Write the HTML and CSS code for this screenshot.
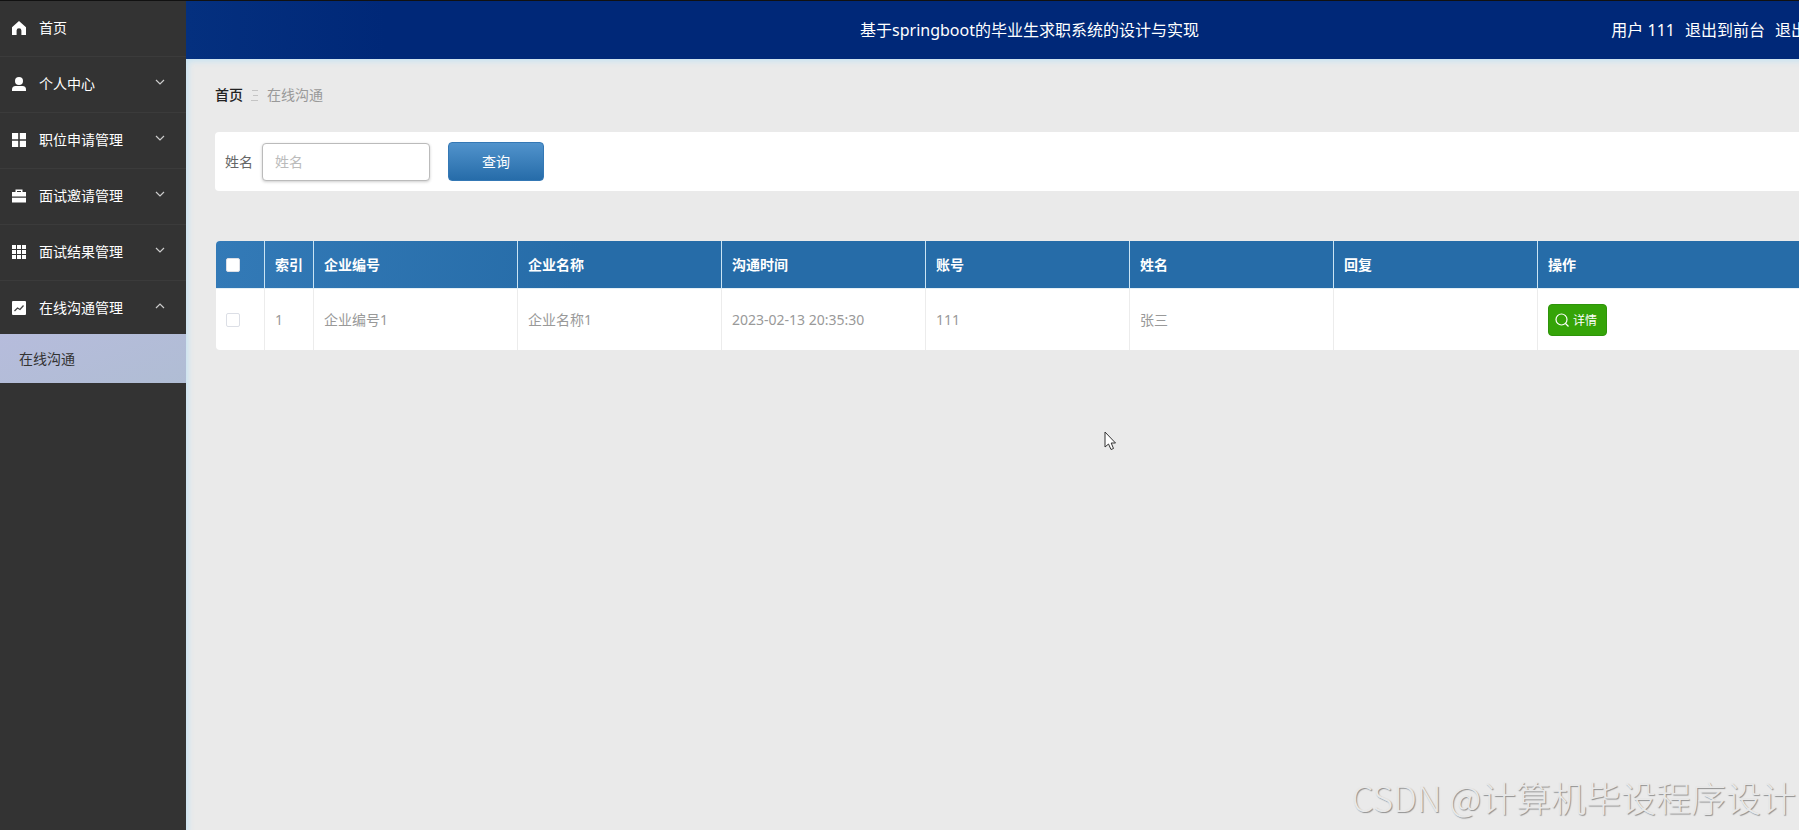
FILE: index.html
```html
<!DOCTYPE html>
<html lang="zh-CN">
<head>
    <meta charset="UTF-8">
    <meta name="viewport" content="width=device-width, initial-scale=1.0">
    <title>基于springboot的毕业生求职系统的设计与实现</title>
    <link rel="stylesheet" href="styles.css">
</head>
<body>

    <div class="app">

        <!-- 左侧菜单 -->

        <nav class="sidebar">
            <a href="#" class="menu-item">
                <svg class="menu-icon" viewBox="0 0 16 16"><path d="M8 1 15 7.2V15H10.4V10.6A2 2 0 0 0 5.6 10.6V15H1V7.2Z"/></svg>
                <span>首页</span>
            </a>
            <a href="#" class="menu-item">
                <svg class="menu-icon" viewBox="0 0 16 16"><circle cx="8" cy="5" r="4"/><path d="M1 15V13.500Q1 10 4.500 10H11.500Q15 10 15 13.500V15Z"/></svg>
                <span>个人中心</span>
                <svg class="arrow" viewBox="0 0 10 10"><path d="M1 3 5 7 9 3"/></svg>
            </a>
            <a href="#" class="menu-item">
                <svg class="menu-icon" viewBox="0 0 16 16"><path d="M1 1H7.200V7.200H1ZM8.800 1H15V7.200H8.800ZM1 8.800H7.200V15H1ZM8.800 8.800H15V15H8.800Z"/></svg>
                <span>职位申请管理</span>
                <svg class="arrow" viewBox="0 0 10 10"><path d="M1 3 5 7 9 3"/></svg>
            </a>
            <a href="#" class="menu-item">
                <svg class="menu-icon" viewBox="0 0 16 16"><path fill-rule="evenodd" d="M4.500 4V1.500H11.500V4H15V8.600H1V4ZM6 4H10V3H6ZM1 9.800H15V14.500H1Z"/></svg>
                <span>面试邀请管理</span>
                <svg class="arrow" viewBox="0 0 10 10"><path d="M1 3 5 7 9 3"/></svg>
            </a>
            <a href="#" class="menu-item">
                <svg class="menu-icon" viewBox="0 0 16 16"><path d="M1 1H5V5H1ZM6 1H10V5H6ZM11 1H15V5H11ZM1 6H5V10H1ZM6 6H10V10H6ZM11 6H15V10H11ZM1 11H5V15H1ZM6 11H10V15H6ZM11 11H15V15H11Z"/></svg>
                <span>面试结果管理</span>
                <svg class="arrow" viewBox="0 0 10 10"><path d="M1 3 5 7 9 3"/></svg>
            </a>
            <a href="#" class="menu-item">
                <svg class="menu-icon" viewBox="0 0 16 16"><rect x="1" y="1" width="14" height="14" rx="1"/><path class="chart-line" d="M3.500 11 6.500 8 9 9.500 12.500 5.500"/></svg>
                <span>在线沟通管理</span>
                <svg class="arrow" viewBox="0 0 10 10"><path d="M1 7 5 3 9 7"/></svg>
            </a>
            <a href="#" class="submenu-item">在线沟通</a>
        </nav>

        <div class="content">

            <!-- 顶部 -->

            <header class="header">
                <h1 class="title">基于springboot的毕业生求职系统的设计与实现</h1>
                <div class="user-info">
                    <span>用户 111</span>
                    <a href="#">退出到前台</a>
                    <a href="#">退出登录</a>
                </div>
            </header>

            <main class="main">
                <div class="breadcrumb">
                    <a href="#">首页</a>
                    <svg class="separator" viewBox="0 0 8 12"><path d="M1 1.500H7M2 6.500H7M0 11.500H7"/></svg>
                    <span>在线沟通</span>
                </div>

                <!-- 查询条件 -->

                <form class="search">
                    <label for="name">姓名</label>
                    <input type="text" id="name" class="search-input" placeholder="姓名">
                    <button type="button" class="search-btn">查询</button>
                </form>

                <!-- 数据列表 -->

                <div class="table-wrap">
                    <table class="table">
                        <colgroup>
                            <col class="col-small">
                            <col class="col-small">
                            <col class="col-data" span="6">
                            <col>
                        </colgroup>
                        <thead>
                            <tr>
                                <th><input type="checkbox" class="check" aria-label="全选"></th>
                                <th>索引</th>
                                <th>企业编号</th>
                                <th>企业名称</th>
                                <th>沟通时间</th>
                                <th>账号</th>
                                <th>姓名</th>
                                <th>回复</th>
                                <th>操作</th>
                            </tr>
                        </thead>
                        <tbody>
                            <tr>
                                <td><input type="checkbox" class="check" aria-label="选择"></td>
                                <td>1</td>
                                <td>企业编号1</td>
                                <td>企业名称1</td>
                                <td>2023-02-13 20:35:30</td>
                                <td>111</td>
                                <td>张三</td>
                                <td></td>
                                <td>
                                    <button type="button" class="detail-btn">
                                        <svg viewBox="0 0 14 14"><circle cx="6.500" cy="6.500" r="5.500"/><path d="M10.500 10.500 13.500 13.500"/></svg>
                                        详情
                                    </button>
                                </td>
                            </tr>
                        </tbody>
                    </table>
                </div>
            </main>
        </div>
    </div>

    <svg class="cursor" viewBox="0 0 12 20"><path d="M1 1V16L4.500 13 7 18.500 9.500 17.500 7.200 12H11.500Z"/></svg>
    <div class="watermark">CSDN @计算机毕设程序设计</div>

</body>
</html>
```

FILE: styles.css
```css
* {
    box-sizing: border-box;
}

body {
    margin: 0;
    font-family: "Noto Sans", "Noto Sans CJK SC", sans-serif;
    font-size: 14px;
    line-height: 20px;
    overflow: hidden;
}

a {
    color: inherit;
    text-decoration: none;
}

/* 页面比窗口宽，右侧被裁掉 */

.app {
    display: flex;
    width: calc(100% + 74px);
    min-height: 100vh;
    border-top: 1px solid #111;
}

/* 左侧菜单 */

.sidebar {
    flex: none;
    width: 186px;
    background: #333;
    color: #fff;
}

.menu-item {
    display: flex;
    align-items: center;
    height: 56px;
    padding: 0 21px 2px 11px;
    border-bottom: 1px solid #3b3b3b;
}

.menu-item:nth-child(6) {
    height: 53px;
    border-bottom: none;
    padding-bottom: 0;
}

.menu-icon {
    width: 16px;
    height: 16px;
    margin-right: 12px;
    fill: #fff;
}

.chart-line {
    fill: none;
    stroke: #444;
    stroke-width: 1.3;
}

.arrow {
    width: 10px;
    height: 10px;
    margin-left: auto;
    margin-bottom: 4px;
    fill: none;
    stroke: #ccc;
    stroke-width: 1.2;
}

.submenu-item {
    display: flex;
    align-items: center;
    height: 49px;
    padding-left: 19px;
    background: linear-gradient(160deg, #b6bcdc, #b0bdd4);
    color: #333;
}

/* 顶部 */

.content {
    flex: 1;
    display: flex;
    flex-direction: column;
}

.header {
    display: grid;
    grid-template-columns: 1fr auto 1fr;
    align-items: center;
    height: 58px;
    background: linear-gradient(90deg, #04307f, #002878 200px);
    color: #fff;
    font-size: 16px;
}

.title {
    grid-column: 2;
    margin: 0;
    font-size: 16px;
    font-weight: normal;
}

.user-info {
    display: flex;
    justify-content: flex-end;
    gap: 10px;
    padding-right: 34px;
}

.main {
    flex: 1;
    padding: 26px 29px;
    background: #eaeaea;
    box-shadow: inset 6px 6px 6px -4px #c4e2f3;
}

.breadcrumb {
    display: flex;
    align-items: center;
    gap: 8px;
    margin-bottom: 27px;
    color: #999;
}

.breadcrumb a {
    color: #222;
    font-weight: 500;
}

.separator {
    width: 8px;
    height: 12px;
    fill: none;
    stroke: #c4c4c4;
}

/* 查询条件 */

.search {
    display: flex;
    align-items: center;
    height: 59px;
    margin-bottom: 50px;
    padding: 0 10px;
    border-radius: 4px;
    background: #fff;
    color: #666;
}

.search-input {
    width: 168px;
    height: 38px;
    margin: 0 18px 0 9px;
    padding: 0 12px;
    border: 1px solid #bbb;
    border-radius: 4px;
    box-shadow: 0 1px 3px #ccc;
    font: inherit;
}

.search-input::placeholder {
    color: #bbb;
}

.search-btn {
    width: 96px;
    height: 39px;
    padding: 0;
    border: 1px solid #3478b5;
    border-radius: 4px;
    background: linear-gradient(#5193cc, #266ca9);
    color: #fff;
    font: inherit;
}

/* 数据列表 */

.table-wrap {
    padding: 0 1px;
}

.table {
    width: 100%;
    table-layout: fixed;
    border-collapse: separate;
    border-spacing: 0;
    border-radius: 4px;
    overflow: hidden;
    background: #fff;
}

.col-small {
    width: 49px;
}

.col-data {
    width: 204px;
}

.table thead tr {
    background: linear-gradient(100deg, #337ab7, #266ca8 360px);
}

.table th {
    height: 48px;
    padding: 0 10px;
    border-right: 1px solid #c9e4f4;
    border-bottom: 1px solid #e5f0f6;
    color: #fff;
    font-weight: bold;
    text-align: left;
}

.table td {
    height: 61px;
    padding: 0 10px;
    border-right: 1px solid #ececec;
    color: #999;
}

.check {
    appearance: none;
    display: block;
    width: 14px;
    height: 14px;
    margin: 0;
    border: 1px solid #dcdfe6;
    border-radius: 2px;
    background: #fff;
}

.detail-btn {
    display: flex;
    align-items: center;
    gap: 4px;
    height: 32px;
    padding: 0 9px 0 6px;
    border: 1px solid #2e940a;
    border-radius: 4px;
    background: #35a408;
    color: #fff;
    font-family: inherit;
    font-size: 12px;
}

.detail-btn svg {
    width: 14px;
    height: 14px;
    fill: none;
    stroke: #fff;
    stroke-width: 1.2;
}

/* 鼠标指针和水印 */

.cursor {
    position: absolute;
    top: 431px;
    left: 1104px;
    width: 12px;
    height: 20px;
    fill: #fff;
    stroke: #333;
}

.watermark {
    position: absolute;
    right: 3px;
    bottom: 8px;
    color: #e8e8e8;
    font-family: "Noto Sans CJK SC", sans-serif;
    font-size: 35px;
    font-weight: 300;
    line-height: 50px;
    text-shadow: 1px 1px 1px #909090;
}
```
